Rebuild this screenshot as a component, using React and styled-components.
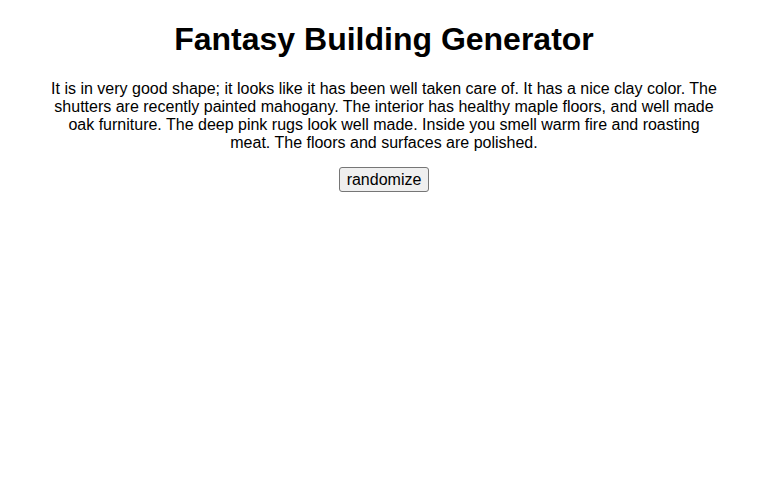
import React from 'react';
import styled, { createGlobalStyle } from 'styled-components';

const GlobalStyle = createGlobalStyle`
    body {
        margin: 0 8px 8px;
        font-family: "Liberation Sans", Arial, sans-serif;
        color: #000;
        background: #fff;
    }
`;

const Page = styled.div`
    display: flex;
    flex-direction: column;
    align-items: center;
    text-align: center;
`;

const Title = styled.h1`
    font-size: 32px;
    font-weight: bold;
    margin: 21.44px 0;
`;

const Description = styled.p`
    font-size: 16px;
    line-height: 18px;
    max-width: 670px;
    margin: 0 0 15px;
`;

const RandomizeBtn = styled.button`
    font-family: inherit;
    font-size: 16px;
    line-height: 18px;
    padding: 3px 7px 2px;
    background-color: #efefef;
    border: 1px solid #767676;
    border-radius: 3px;
    color: #000;
    cursor: pointer;
`;

const App = () => {
    return (
        <Page>
            <GlobalStyle />
            <Title>Fantasy Building Generator</Title>
            <Description>
                It is in very good shape; it looks like it has been well taken care of. It has a nice clay color.
                The shutters are recently painted mahogany. The interior has healthy maple floors, and well made
                oak furniture. The deep pink rugs look well made. Inside you smell warm fire and roasting meat.
                The floors and surfaces are polished.
            </Description>
            <RandomizeBtn>randomize</RandomizeBtn>
        </Page>
    );
};

export default App;
